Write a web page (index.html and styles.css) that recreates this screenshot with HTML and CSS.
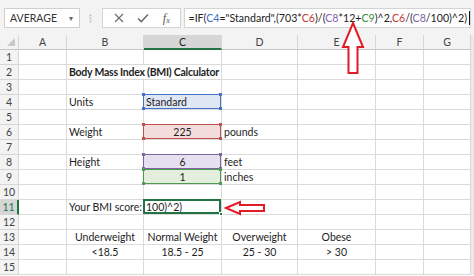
FILE: index.html
```html
<!DOCTYPE html>
<html>
<head>
<meta charset="utf-8">
<link rel="stylesheet" href="styles.css">
</head>
<body>
<div class="app">
  <div class="toolbar">
    <div class="namebox"><span class="name">AVERAGE</span><span class="caret">▾</span></div>
    <div class="grip"><i></i><i></i><i></i></div>
    <div class="fxbox">
      <svg class="ico" width="10" height="10" viewBox="0 0 10 10"><path d="M1 1 L9 9 M9 1 L1 9" stroke="#6b6b6b" stroke-width="1.1" fill="none"/></svg>
      <svg class="ico" width="12" height="10" viewBox="0 0 12 10"><path d="M1 5.5 L4.3 8.6 L11 1.5" stroke="#6b6b6b" stroke-width="1.5" fill="none"/></svg>
      <span class="fx"><i>f</i><sub>x</sub></span>
    </div>
    <div class="formula"><span>=IF(<b class="r-blue">C4</b>="Standard",(703*<b class="r-red">C6</b>)/(<b class="r-purple">C8</b>*12+<b class="r-green">C9</b>)^2,<b class="r-red">C6</b>/(<b class="r-purple">C8</b>/100)^2)</span><span class="cursor"></span></div>
  </div>

  <div class="sheet">
    <div class="hd corner"><span class="tri"></span></div><div class="hd">A</div><div class="hd">B</div><div class="hd sel-col">C</div><div class="hd">D</div><div class="hd">E</div><div class="hd">F</div><div class="hd">G</div>

    <div class="rn">1</div><div class="c"></div><div class="c"></div><div class="c"></div><div class="c"></div><div class="c"></div><div class="c"></div><div class="c"></div>
    <div class="rn">2</div><div class="c"></div><div class="c span2 title">Body Mass Index (BMI) Calculator</div><div class="c"></div><div class="c"></div><div class="c"></div><div class="c"></div>
    <div class="rn">3</div><div class="c"></div><div class="c"></div><div class="c"></div><div class="c"></div><div class="c"></div><div class="c"></div><div class="c"></div>
    <div class="rn">4</div><div class="c"></div><div class="c">Units</div><div class="c rng blue">Standard<i class="k tl"></i><i class="k tr"></i><i class="k bl"></i><i class="k br"></i></div><div class="c"></div><div class="c"></div><div class="c"></div><div class="c"></div>
    <div class="rn">5</div><div class="c"></div><div class="c"></div><div class="c"></div><div class="c"></div><div class="c"></div><div class="c"></div><div class="c"></div>
    <div class="rn">6</div><div class="c"></div><div class="c">Weight</div><div class="c rng red ctr">225<i class="k tl"></i><i class="k tr"></i><i class="k bl"></i><i class="k br"></i></div><div class="c">pounds</div><div class="c"></div><div class="c"></div><div class="c"></div>
    <div class="rn">7</div><div class="c"></div><div class="c"></div><div class="c"></div><div class="c"></div><div class="c"></div><div class="c"></div><div class="c"></div>
    <div class="rn">8</div><div class="c"></div><div class="c">Height</div><div class="c rng purple ctr">6<i class="k tl"></i><i class="k tr"></i><i class="k bl"></i><i class="k br"></i></div><div class="c">feet</div><div class="c"></div><div class="c"></div><div class="c"></div>
    <div class="rn">9</div><div class="c"></div><div class="c"></div><div class="c rng green ctr">1<i class="k tl"></i><i class="k tr"></i><i class="k bl"></i><i class="k br"></i></div><div class="c">inches</div><div class="c"></div><div class="c"></div><div class="c"></div>
    <div class="rn">10</div><div class="c"></div><div class="c"></div><div class="c"></div><div class="c"></div><div class="c"></div><div class="c"></div><div class="c"></div>
    <div class="rn sel-row">11</div><div class="c"></div><div class="c">Your BMI score:</div><div class="c active">100)^2)<i class="handle"></i></div><div class="c"></div><div class="c"></div><div class="c"></div><div class="c"></div>
    <div class="rn">12</div><div class="c"></div><div class="c"></div><div class="c"></div><div class="c"></div><div class="c"></div><div class="c"></div><div class="c"></div>
    <div class="rn">13</div><div class="c"></div><div class="c ctr">Underweight</div><div class="c ctr">Normal Weight</div><div class="c ctr">Overweight</div><div class="c ctr">Obese</div><div class="c"></div><div class="c"></div>
    <div class="rn">14</div><div class="c"></div><div class="c ctr">&lt;18.5</div><div class="c ctr">18.5 - 25</div><div class="c ctr">25 - 30</div><div class="c ctr">&gt; 30</div><div class="c"></div><div class="c"></div>
    <div class="rn">15</div><div class="c"></div><div class="c"></div><div class="c"></div><div class="c"></div><div class="c"></div><div class="c"></div><div class="c"></div>
  </div>

  <svg class="arrows" width="474" height="276" viewBox="0 0 474 276">
    <polygon points="353,23 363,47 357.5,47 357.5,73 348.5,73 348.5,47 343,47" fill="#fff" stroke="#e21c26" stroke-width="2" stroke-linejoin="miter"/>
    <polygon points="226,208 240,202 240,205 264,205 264,211 240,211 240,214" fill="#fff" stroke="#e21c26" stroke-width="2" stroke-linejoin="miter"/>
  </svg>
</div>
</body>
</html>
```
FILE: styles.css
```css
* { box-sizing: border-box; }
html, body { margin: 0; padding: 0; }
body {
  width: 474px;
  height: 276px;
  overflow: hidden;
  background: #fff;
  font-family: "Lato", "Liberation Sans", sans-serif;
  font-size: 10.5px;
  color: #1e1e1e;
}
.app { position: relative; width: 474px; height: 276px; overflow: hidden; }

/* toolbar */
.toolbar {
  height: 35px;
  background: #f3f3f3;
  display: flex;
  align-items: flex-start;
  padding: 8px 3px 0 4px;
}
.namebox {
  width: 77px;
  height: 20px;
  background: #fff;
  border: 1px solid #cfcfcf;
  display: flex;
  align-items: center;
  padding: 0 6px 0 5px;
  justify-content: space-between;
}
.name { color: #333; font-size: 10.5px; }
.caret { color: #666; font-size: 8px; }
.grip {
  width: 23px;
  height: 20px;
  display: flex;
  flex-direction: column;
  align-items: center;
  justify-content: center;
  gap: 2px;
}
.grip i { display: block; width: 1px; height: 1px; background: #b8b8b8; box-shadow: 0 0 0 0.5px #d0d0d0; }
.fxbox {
  width: 81px;
  height: 20px;
  background: #fff;
  border: 1px solid #d4d4d4;
  display: flex;
  align-items: center;
  justify-content: space-around;
  padding: 0 4px;
}
.ico { display: block; }
.fx { font-family: "Liberation Serif", serif; color: #555; font-size: 12px; }
.fx i { font-style: italic; }
.fx sub { font-size: 8px; font-style: italic; vertical-align: -1px; }
.formula {
  flex: 1;
  margin-left: 3px;
  height: 20px;
  background: #fff;
  border: 1px solid #d4d4d4;
  display: flex;
  align-items: center;
  padding-left: 3px;
  white-space: nowrap;
  font-size: 10.6px;
  color: #222;
}
.formula b { font-weight: normal; }
.r-blue { color: #3a6fc4; }
.r-red { color: #c43a3a; }
.r-purple { color: #7f5fae; }
.r-green { color: #3a8a3e; }
.cursor { display: inline-block; width: 1px; height: 14px; background: #111; margin-left: 2px; }

/* sheet */
.sheet {
  display: grid;
  grid-template-columns: 19px 48px 77px 78px 76px 78px 48px 47px;
  grid-auto-rows: 15px;
  width: 474px;
  background: #e9e9e9;
}
.hd, .rn {
  background: #f3f3f3;
  color: #444;
  border-right: 1px solid #d6d6d6;
  border-bottom: 1px solid #d6d6d6;
  display: flex;
  align-items: center;
  justify-content: center;
  font-size: 10.5px;
}
.hd { border-bottom-color: #c6c6c6; }
.corner { position: relative; }
.tri {
  position: absolute;
  right: 3px;
  bottom: 3px;
  width: 0; height: 0;
  border-left: 8px solid transparent;
  border-bottom: 8px solid #c8c8c8;
}
.sel-col { background: #d6d6d6; border-bottom: 2px solid #217346; color: #222; }
.sel-row { background: #d6d6d6; border-right: 2px solid #217346; color: #217346; }
.c {
  position: relative;
  background: #fff;
  border-right: 1px solid #dadada;
  border-bottom: 1px solid #dadada;
  padding: 0 2px;
  display: flex;
  align-items: center;
  white-space: nowrap;
  overflow: visible;
}
.span2 { grid-column: span 2; }
.title { font-weight: bold; letter-spacing: -0.25px; z-index: 3; }
.ctr { justify-content: center; }

.rng::before, .active::before {
  content: "";
  position: absolute;
  left: -1px; top: -1px; right: 0; bottom: 0;
  border: 1px solid;
  pointer-events: none;
}
.rng { z-index: 1; }
.blue { background: #dfe7f5; }
.blue::before { border-color: #4472c4; }
.red { background: #f2dcdc; }
.red::before { border-color: #c0504d; }
.purple { background: #e5e0ef; }
.purple::before { border-color: #8064a2; }
.green { background: #e3efdc; }
.green::before { border-color: #4f9a52; }
.k { position: absolute; width: 3px; height: 3px; }
.tl { left: -2px; top: -2px; }
.tr { right: -1px; top: -2px; }
.bl { left: -2px; bottom: -1px; }
.br { right: -1px; bottom: -1px; }
.blue .k { background: #4472c4; }
.red .k { background: #c0504d; }
.purple .k { background: #8064a2; }
.green .k { background: #4f9a52; }

.active { z-index: 2; }
.active::before { border: 2px solid #217346; }
.handle { position: absolute; right: -2px; bottom: -2px; width: 4px; height: 4px; background: #217346; border: 1px solid #fff; }

.arrows { position: absolute; left: 0; top: 0; pointer-events: none; }
```
